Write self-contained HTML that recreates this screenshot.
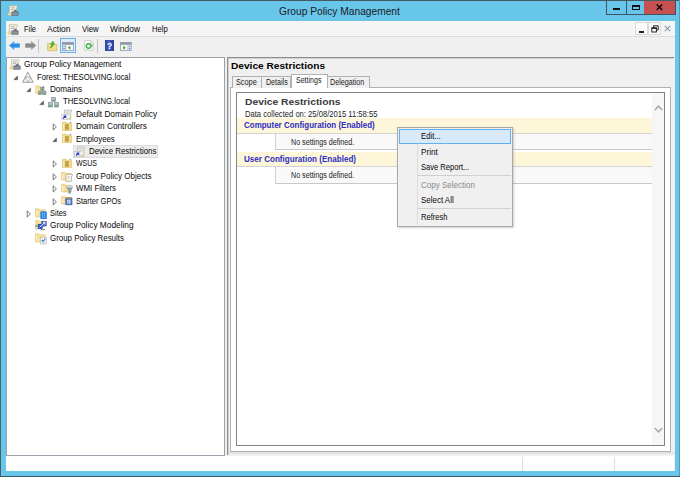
<!DOCTYPE html>
<html><head><meta charset="utf-8"><title>Group Policy Management</title>
<style>
html,body{margin:0;padding:0}
body{width:680px;height:477px;overflow:hidden;position:relative;background:#67c6ea;font-family:"Liberation Sans",sans-serif;font-size:9px;color:#000}
.abs{position:absolute;line-height:0}
div{box-sizing:border-box}
.t{position:absolute;white-space:nowrap;line-height:1;color:#080808;transform-origin:0 0}
.sel{position:absolute;background:#ececec;border:1px solid #dcdcdc}
.r{position:absolute;white-space:nowrap}
</style></head><body>
<!-- window frame -->
<div class="abs" style="left:0;top:0;width:680px;height:1px;background:#435a64"></div>
<div class="abs" style="left:0;top:0;width:1px;height:477px;background:#46606c"></div>
<div class="abs" style="left:679px;top:0;width:1px;height:477px;background:#5a9ab5"></div>
<div class="abs" style="left:0;top:476px;width:680px;height:1px;background:#3f5964"></div>
<!-- title -->
<div class="t" style="left:279.3px;top:5.89px;font-size:11.0px;transform:scaleX(0.928);color:#1a1a1a">Group Policy Management</div>
<div class="abs" style="left:6.5px;top:4px"><svg width="13" height="13" viewBox="0 0 13 13"><path d="M2.3 1.7 H9.7 Q10.7 1.7 10.4 2.7 L9.5 4 V9.2 H2.3 Z" fill="#f8f2de" stroke="#b4ab92" stroke-width="0.6"/><path d="M3.8 3.8h4.2M3.8 5.6h3.2" stroke="#9aa2b4" stroke-width="0.8"/><rect x="0.6" y="9" width="4.6" height="2.2" rx="1" fill="#f0dc9c" stroke="#d8c078" stroke-width="0.4"/><path d="M6.1 7.9 L8.3 5.2 L10.5 7.9 Z" fill="#5c646e"/><path d="M7.7 7.6 L8.3 6.6 L8.9 7.6Z" fill="#e8e0b8"/><rect x="4.8" y="7.9" width="6.4" height="3.5" fill="#74828f" stroke="#5a6672" stroke-width="0.5"/><path d="M5.6 9.1h4.8M5.6 10.3h4.8" stroke="#aab4be" stroke-width="0.5"/></svg></div>
<!-- caption buttons -->
<div class="abs" style="left:606px;top:1px;width:70px;height:14px;border:1px solid #3d5560;border-top:none;background:#67c6ea"></div>
<div class="abs" style="left:626px;top:1px;width:1px;height:14px;background:#3d5560"></div>
<div class="abs" style="left:644px;top:1px;width:31px;height:13px;background:#c75050"></div>
<div class="abs" style="left:613px;top:8.4px;width:7px;height:2px;background:#111"></div>
<div class="abs" style="left:631.5px;top:4.5px;width:8px;height:5.6px;border:1px solid #111;border-top-width:2px"></div>
<div class="abs" style="left:656px;top:4.3px"><svg width="7" height="6.4" viewBox="0 0 7 6.4"><path d="M0.8 0.4 L6.2 6 M6.2 0.4 L0.8 6" stroke="#111" stroke-width="1.5"/></svg></div>
<!-- client -->
<div class="abs" style="left:6px;top:21px;width:669px;height:450px;background:#f0f0f0"></div>
<!-- menubar -->
<div class="abs" style="left:6px;top:21px;width:669px;height:15px;background:#f5f5f5"></div>
<div class="abs" style="left:6px;top:36px;width:669px;height:1px;background:#dcdcdc"></div>
<div class="abs" style="left:7px;top:22.8px"><svg width="13" height="13" viewBox="0 0 13 13"><path d="M2.3 1.7 H9.7 Q10.7 1.7 10.4 2.7 L9.5 4 V9.2 H2.3 Z" fill="#f8f2de" stroke="#b4ab92" stroke-width="0.6"/><path d="M3.8 3.8h4.2M3.8 5.6h3.2" stroke="#9aa2b4" stroke-width="0.8"/><rect x="0.6" y="9" width="4.6" height="2.2" rx="1" fill="#f0dc9c" stroke="#d8c078" stroke-width="0.4"/><path d="M6.1 7.9 L8.3 5.2 L10.5 7.9 Z" fill="#5c646e"/><path d="M7.7 7.6 L8.3 6.6 L8.9 7.6Z" fill="#e8e0b8"/><rect x="4.8" y="7.9" width="6.4" height="3.5" fill="#74828f" stroke="#5a6672" stroke-width="0.5"/><path d="M5.6 9.1h4.8M5.6 10.3h4.8" stroke="#aab4be" stroke-width="0.5"/></svg></div>
<div class="t" style="left:23.8px;top:24.88px;font-size:9.0px;transform:scaleX(0.820)">File</div>
<div class="t" style="left:47.0px;top:24.88px;font-size:9.0px;transform:scaleX(0.939)">Action</div>
<div class="t" style="left:82.0px;top:24.88px;font-size:9.0px;transform:scaleX(0.863)">View</div>
<div class="t" style="left:110.0px;top:24.88px;font-size:9.0px;transform:scaleX(0.937)">Window</div>
<div class="t" style="left:151.8px;top:24.88px;font-size:9.0px;transform:scaleX(0.848)">Help</div>
<!-- mdi buttons -->
<div class="abs" style="left:635px;top:22px;width:13px;height:13px;background:#fbfbfb;border:1px solid #d8d8d8"></div>
<div class="abs" style="left:648px;top:22px;width:13px;height:13px;background:#fbfbfb;border:1px solid #d8d8d8"></div>
<div class="abs" style="left:639px;top:31px;width:5px;height:2px;background:#222"></div>
<div class="abs" style="left:651px;top:25px"><svg width="8" height="8" viewBox="0 0 8 8"><path d="M2.5 2.5 V0.8 H7.2 V5 H5.5" fill="none" stroke="#222" stroke-width="1"/><rect x="0.8" y="2.8" width="4.6" height="4.2" fill="#fbfbfb" stroke="#222" stroke-width="1"/><path d="M0.8 3.2h4.6" stroke="#222" stroke-width="1.4"/></svg></div>
<div class="abs" style="left:664px;top:25px"><svg width="7" height="7" viewBox="0 0 7 7"><path d="M0.8 0.8 L6.2 6.2 M6.2 0.8 L0.8 6.2" stroke="#8a9bb0" stroke-width="1.2"/></svg></div>
<!-- toolbar -->
<div class="abs" style="left:9px;top:41px"><svg width="11" height="9" viewBox="0 0 11 9"><defs><linearGradient id="gb" x1="0" y1="0" x2="0" y2="1"><stop offset="0" stop-color="#6ab8f4"/><stop offset="0.5" stop-color="#2288e6"/><stop offset="1" stop-color="#58aaf0"/></linearGradient></defs><path d="M0.3 4.5 L5 0.4 V2.6 H10.7 V6.4 H5 V8.6 Z" fill="url(#gb)" stroke="#4aa0ee" stroke-width="0.5"/></svg></div>
<div class="abs" style="left:24.8px;top:41px"><svg width="11.4" height="9" viewBox="0 0 11.4 9"><defs><linearGradient id="gg" x1="0" y1="0" x2="0" y2="1"><stop offset="0" stop-color="#b0b0b0"/><stop offset="0.5" stop-color="#858585"/><stop offset="1" stop-color="#a8a8a8"/></linearGradient></defs><path d="M11.1 4.5 L6.4 0.4 V2.6 H0.4 V6.4 H6.4 V8.6 Z" fill="url(#gg)" stroke="#909090" stroke-width="0.5"/></svg></div>
<div class="abs" style="left:38px;top:39px;width:1px;height:14px;background:#c4c4c4"></div>
<div class="abs" style="left:46.5px;top:39.5px"><svg width="11" height="12" viewBox="0 0 11 12"><path d="M0.6 3.6 h3.2 l0.8 0.9 h5.2 v6.3 h-9.2z" fill="#f2dc8e" stroke="#d4b55a" stroke-width="0.7"/><path d="M2.6 7.8 C3.6 7.2 4.6 6.4 4.8 4.2 L3.4 4.2 L6 1 L7.6 4.2 L6.4 4.2 C6.2 6.6 4.8 7.8 2.6 7.8Z" fill="#4cb83c" stroke="#2f9828" stroke-width="0.4"/></svg></div>
<div class="abs" style="left:60px;top:38px;width:16px;height:15px;background:#dcecfb;border:1px solid #62b2ee"></div>
<div class="abs" style="left:62.3px;top:41.8px"><svg width="12" height="9" viewBox="0 0 12 9"><rect x="0.4" y="0.4" width="11.2" height="8.2" fill="#f6f8fa" stroke="#8e9aa6" stroke-width="0.8"/><rect x="0.4" y="0.4" width="11.2" height="2.4" fill="#8e98a4"/><path d="M3.6 2.8v5.8" stroke="#8e9aa6" stroke-width="0.7"/><path d="M8.4 3.8 L5.8 5.8 L8.4 7.8z" fill="#36a836"/><rect x="1.4" y="3.8" width="1.2" height="1.4" fill="#4a80d8"/><rect x="1.4" y="6" width="1.2" height="1.4" fill="#4a80d8"/></svg></div>
<div class="abs" style="left:84.3px;top:40.2px"><svg width="9.6" height="10.6" viewBox="0 0 9.6 10.6"><path d="M0.4 0.4 H6.6 L9.2 3 V10.2 H0.4 Z" fill="#fbfbfb" stroke="#bcbcbc" stroke-width="0.7"/><path d="M6.6 0.4 V3 H9.2" fill="#e8e8e8" stroke="#bcbcbc" stroke-width="0.5"/><circle cx="4.6" cy="6" r="2.3" fill="none" stroke="#3eb03e" stroke-width="1.4"/><path d="M5.4 6.6 h3 v-2.6z" fill="#2f9a2f"/><path d="M6.2 6.2 l1.6 0" stroke="#fbfbfb" stroke-width="0.5"/></svg></div>
<div class="abs" style="left:97px;top:39px;width:1px;height:14px;background:#c4c4c4"></div>
<div class="abs" style="left:105px;top:40px"><svg width="9" height="11" viewBox="0 0 9 11"><defs><linearGradient id="gh" x1="0" y1="0" x2="1" y2="0"><stop offset="0" stop-color="#2a3c9c"/><stop offset="0.5" stop-color="#4a6cdc"/><stop offset="1" stop-color="#1c2c84"/></linearGradient></defs><rect x="0.3" y="0.3" width="8.4" height="10.4" fill="url(#gh)" stroke="#1c2a78" stroke-width="0.6"/><text x="4.5" y="8.8" font-family="Liberation Sans, sans-serif" font-size="9" font-weight="bold" fill="#fff" text-anchor="middle">?</text></svg></div>
<div class="abs" style="left:120px;top:42px"><svg width="11.6" height="9" viewBox="0 0 11.6 9"><rect x="0.4" y="0.4" width="10.8" height="8.2" fill="#f6f8fa" stroke="#8e9aa6" stroke-width="0.8"/><rect x="0.4" y="0.4" width="10.8" height="2.4" fill="#8e98a4"/><path d="M8 2.8v5.8" stroke="#8e9aa6" stroke-width="0.7"/><path d="M3.2 3.8 L5.8 5.8 L3.2 7.8z" fill="#36a836"/><rect x="9" y="3.8" width="1.2" height="1.4" fill="#4a80d8"/><rect x="9" y="6" width="1.2" height="1.4" fill="#4a80d8"/></svg></div>
<!-- left pane -->
<div class="abs" style="left:6px;top:57px;width:219px;height:399px;background:#fff;border:1px solid #9aa0aa"></div>
<div class="abs" style="left:8.5px;top:57.9px"><svg width="13" height="13" viewBox="0 0 13 13"><path d="M2.3 1.7 H9.7 Q10.7 1.7 10.4 2.7 L9.5 4 V9.2 H2.3 Z" fill="#f8f2de" stroke="#b4ab92" stroke-width="0.6"/><path d="M3.8 3.8h4.2M3.8 5.6h3.2" stroke="#9aa2b4" stroke-width="0.8"/><rect x="0.6" y="9" width="4.6" height="2.2" rx="1" fill="#f0dc9c" stroke="#d8c078" stroke-width="0.4"/><path d="M6.1 7.9 L8.3 5.2 L10.5 7.9 Z" fill="#5c646e"/><path d="M7.7 7.6 L8.3 6.6 L8.9 7.6Z" fill="#e8e0b8"/><rect x="4.8" y="7.9" width="6.4" height="3.5" fill="#74828f" stroke="#5a6672" stroke-width="0.5"/><path d="M5.6 9.1h4.8M5.6 10.3h4.8" stroke="#aab4be" stroke-width="0.5"/></svg></div>
<div class="t" style="left:23.6px;top:60.28px;font-size:9px;transform:scaleX(0.914)">Group Policy Management</div>
<div class="abs" style="left:12.5px;top:74.8px"><svg width="6" height="6" viewBox="0 0 6 6"><path d="M4.6 0.8 V4.8 H0.6 Z" fill="#595959" stroke="#4a4a4a" stroke-width="0.3"/></svg></div>
<div class="abs" style="left:21.5px;top:70.3px"><svg width="13" height="13" viewBox="0 0 13 13"><g transform="translate(-0.2,0.5)"><path d="M6 1.6 L11.4 11.8 H0.8 Z" fill="#f2f2f2" stroke="#8a8a8a" stroke-width="0.8"/><path d="M3.4 6.8 H8.8 L6.1 11.8 Z" fill="#fff" stroke="#9a9a9a" stroke-width="0.7"/></g></svg></div>
<div class="t" style="left:36.6px;top:72.68px;font-size:9px;transform:scaleX(0.859)">Forest: THESOLVING.local</div>
<div class="abs" style="left:25.5px;top:87.2px"><svg width="6" height="6" viewBox="0 0 6 6"><path d="M4.6 0.8 V4.8 H0.6 Z" fill="#595959" stroke="#4a4a4a" stroke-width="0.3"/></svg></div>
<div class="abs" style="left:34.5px;top:82.7px"><svg width="13" height="13" viewBox="0 0 13 13"><path d="M0.7 2.9 h3.2 l0.9 1 h4.5 v6.4 h-8.6z" fill="#f5e09a" stroke="#dcc070" stroke-width="0.6"/><path d="M1.9 4.5 v4.8" stroke="#fbf0c4" stroke-width="1.2"/><rect x="5.6" y="4.4" width="3.2" height="3" fill="#98a6b0" stroke="#72808a" stroke-width="0.4"/><rect x="3.2" y="8" width="3.4" height="3.6" fill="#98a6b0" stroke="#72808a" stroke-width="0.4"/><rect x="7.4" y="8" width="3.6" height="3.6" fill="#98a6b0" stroke="#72808a" stroke-width="0.4"/><rect x="3.8" y="10.4" width="2" height="1" fill="#44b034"/><rect x="8.2" y="10.4" width="2" height="1" fill="#44b034"/><rect x="6.4" y="6.2" width="1.6" height="0.9" fill="#44b034"/><circle cx="8.2" cy="4" r="0.8" fill="#3a7ee0"/></svg></div>
<div class="t" style="left:49.6px;top:85.08px;font-size:9px;transform:scaleX(0.901)">Domains</div>
<div class="abs" style="left:38.5px;top:99.6px"><svg width="6" height="6" viewBox="0 0 6 6"><path d="M4.6 0.8 V4.8 H0.6 Z" fill="#595959" stroke="#4a4a4a" stroke-width="0.3"/></svg></div>
<div class="abs" style="left:47.5px;top:95.1px"><svg width="13" height="13" viewBox="0 0 13 13"><g transform="translate(-0.7,0)"><rect x="4.2" y="2.3" width="4.2" height="4" fill="#a2aeb8" stroke="#74828c" stroke-width="0.5"/><rect x="1" y="7.4" width="4.4" height="4.6" fill="#a2aeb8" stroke="#74828c" stroke-width="0.5"/><rect x="7" y="7.4" width="4.4" height="4.6" fill="#a2aeb8" stroke="#74828c" stroke-width="0.5"/><path d="M4.8 3.6h3M1.6 8.8h3.2M7.6 8.8h3.2" stroke="#dfe5ea" stroke-width="0.6"/><rect x="1.8" y="10.6" width="2.6" height="1.1" fill="#40b030"/><rect x="7.8" y="10.6" width="2.6" height="1.1" fill="#40b030"/><rect x="5.2" y="5" width="2.2" height="0.9" fill="#40b030"/></g></svg></div>
<div class="t" style="left:62.6px;top:97.48px;font-size:9px;transform:scaleX(0.855)">THESOLVING.local</div>
<div class="abs" style="left:60.5px;top:107.5px"><svg width="13" height="13" viewBox="0 0 13 13"><g transform="translate(0,-0.5)"><path d="M3.4 2.6 H10.2 Q11.2 2.6 10.8 3.6 L9.8 4.8 V11.6 H3.4 Z" fill="#f0efe8" stroke="#a4a29a" stroke-width="0.6"/><path d="M4.8 4.6h3.6M4.8 6.4h3.6" stroke="#b0b4c0" stroke-width="0.7"/><path d="M8.6 10.2 q1.6 0.4 1.4 1.6 h-3" fill="#ecdca4" stroke="#c8b884" stroke-width="0.4"/><rect x="0.8" y="7.2" width="4.8" height="4.8" fill="#fbfbfb" stroke="#a8a8a8" stroke-width="0.5"/><path d="M2 11 L4.2 8.8 M4.4 10.4 V8.6 H2.6" stroke="#2030c8" stroke-width="1.1" fill="none"/></g></svg></div>
<div class="t" style="left:75.6px;top:109.88px;font-size:9px;transform:scaleX(0.915)">Default Domain Policy</div>
<div class="abs" style="left:52px;top:123.1px"><svg width="6" height="8" viewBox="0 0 6 8"><path d="M1.2 0.8 L4.4 3.9 L1.2 7 Z" fill="#fff" stroke="#5a5a5a" stroke-width="0.8"/></svg></div>
<div class="abs" style="left:60.5px;top:119.9px"><svg width="13" height="13" viewBox="0 0 13 13"><path d="M1.5 2.2 h3.4 l0.9 1 h4.8 v7.2 h-9.1z" fill="#f3dc8c" stroke="#d8b95c" stroke-width="0.6"/><path d="M2.6 4 v5.4" stroke="#faedb8" stroke-width="1.2"/><rect x="4.6" y="4.6" width="3" height="1.8" fill="#c4a248" stroke="#98782c" stroke-width="0.4"/><rect x="4.6" y="7.4" width="3" height="1.8" fill="#c4a248" stroke="#98782c" stroke-width="0.4"/><path d="M6.1 6.6v0.8" stroke="#98782c" stroke-width="0.6"/><circle cx="9.4" cy="2.4" r="0.7" fill="#5a9ae8"/></svg></div>
<div class="t" style="left:75.6px;top:122.28px;font-size:9px;transform:scaleX(0.922)">Domain Controllers</div>
<div class="abs" style="left:51.5px;top:136.8px"><svg width="6" height="6" viewBox="0 0 6 6"><path d="M4.6 0.8 V4.8 H0.6 Z" fill="#595959" stroke="#4a4a4a" stroke-width="0.3"/></svg></div>
<div class="abs" style="left:60.5px;top:132.3px"><svg width="13" height="13" viewBox="0 0 13 13"><path d="M1.5 2.2 h3.4 l0.9 1 h4.8 v7.2 h-9.1z" fill="#f3dc8c" stroke="#d8b95c" stroke-width="0.6"/><path d="M2.6 4 v5.4" stroke="#faedb8" stroke-width="1.2"/><rect x="4.6" y="4.6" width="3" height="1.8" fill="#c4a248" stroke="#98782c" stroke-width="0.4"/><rect x="4.6" y="7.4" width="3" height="1.8" fill="#c4a248" stroke="#98782c" stroke-width="0.4"/><path d="M6.1 6.6v0.8" stroke="#98782c" stroke-width="0.6"/><circle cx="9.4" cy="2.4" r="0.7" fill="#5a9ae8"/></svg></div>
<div class="t" style="left:75.6px;top:134.68px;font-size:9px;transform:scaleX(0.871)">Employees</div>
<div class="sel" style="left:72.5px;top:144.8px;width:85px;height:13px"></div>
<div class="abs" style="left:73.5px;top:144.7px"><svg width="13" height="13" viewBox="0 0 13 13"><g transform="translate(0,-0.5)"><path d="M3.4 2.6 H10.2 Q11.2 2.6 10.8 3.6 L9.8 4.8 V11.6 H3.4 Z" fill="#f0efe8" stroke="#a4a29a" stroke-width="0.6"/><path d="M4.8 4.6h3.6M4.8 6.4h3.6" stroke="#b0b4c0" stroke-width="0.7"/><path d="M8.6 10.2 q1.6 0.4 1.4 1.6 h-3" fill="#ecdca4" stroke="#c8b884" stroke-width="0.4"/><rect x="0.8" y="7.2" width="4.8" height="4.8" fill="#fbfbfb" stroke="#a8a8a8" stroke-width="0.5"/><path d="M2 11 L4.2 8.8 M4.4 10.4 V8.6 H2.6" stroke="#2030c8" stroke-width="1.1" fill="none"/></g></svg></div>
<div class="t" style="left:88.6px;top:147.08px;font-size:9px;transform:scaleX(0.875)">Device Restrictions</div>
<div class="abs" style="left:52px;top:160.3px"><svg width="6" height="8" viewBox="0 0 6 8"><path d="M1.2 0.8 L4.4 3.9 L1.2 7 Z" fill="#fff" stroke="#5a5a5a" stroke-width="0.8"/></svg></div>
<div class="abs" style="left:60.5px;top:157.1px"><svg width="13" height="13" viewBox="0 0 13 13"><path d="M1.5 2.2 h3.4 l0.9 1 h4.8 v7.2 h-9.1z" fill="#f3dc8c" stroke="#d8b95c" stroke-width="0.6"/><path d="M2.6 4 v5.4" stroke="#faedb8" stroke-width="1.2"/><rect x="4.6" y="4.6" width="3" height="1.8" fill="#c4a248" stroke="#98782c" stroke-width="0.4"/><rect x="4.6" y="7.4" width="3" height="1.8" fill="#c4a248" stroke="#98782c" stroke-width="0.4"/><path d="M6.1 6.6v0.8" stroke="#98782c" stroke-width="0.6"/><circle cx="9.4" cy="2.4" r="0.7" fill="#5a9ae8"/></svg></div>
<div class="t" style="left:75.6px;top:159.48px;font-size:9px;transform:scaleX(0.778)">WSUS</div>
<div class="abs" style="left:52px;top:172.7px"><svg width="6" height="8" viewBox="0 0 6 8"><path d="M1.2 0.8 L4.4 3.9 L1.2 7 Z" fill="#fff" stroke="#5a5a5a" stroke-width="0.8"/></svg></div>
<div class="abs" style="left:60.5px;top:169.5px"><svg width="13" height="13" viewBox="0 0 13 13"><path d="M0.6 2.3 h3.2 l0.9 1 h5.7 v6.6 h-9.8z" fill="#f5e09a" stroke="#dcc070" stroke-width="0.6"/><path d="M1.7999999999999998 3.9 v5.0" stroke="#fbf0c4" stroke-width="1.2"/><path d="M5 4.4 H10.8 Q11.8 4.4 11.4 5.4 L10.6 6.2 V11.4 H5 Z" fill="#f8f8f6" stroke="#9a9a9a" stroke-width="0.6"/><path d="M6.2 6.6h3M6.2 8.2h3" stroke="#b8b8c4" stroke-width="0.6"/><path d="M4.6 10.4 h3 v1.2 h-3z" fill="#ecdca4" stroke="#c0b080" stroke-width="0.3"/></svg></div>
<div class="t" style="left:75.6px;top:171.88px;font-size:9px;transform:scaleX(0.894)">Group Policy Objects</div>
<div class="abs" style="left:52px;top:185.1px"><svg width="6" height="8" viewBox="0 0 6 8"><path d="M1.2 0.8 L4.4 3.9 L1.2 7 Z" fill="#fff" stroke="#5a5a5a" stroke-width="0.8"/></svg></div>
<div class="abs" style="left:60.5px;top:181.9px"><svg width="13" height="13" viewBox="0 0 13 13"><path d="M0.6 2.3 h3.2 l0.9 1 h5.7 v6.6 h-9.8z" fill="#f5e09a" stroke="#dcc070" stroke-width="0.6"/><path d="M1.7999999999999998 3.9 v5.0" stroke="#fbf0c4" stroke-width="1.2"/><path d="M5.6 5.4 H11.6 L9.4 8.2 V11.2 H7.8 V8.2 Z" fill="#8aa2ba" stroke="#5c7690" stroke-width="0.5"/><rect x="5.8" y="4" width="5.6" height="1.6" fill="#eef2f6" stroke="#8a9aac" stroke-width="0.4"/></svg></div>
<div class="t" style="left:75.6px;top:184.28px;font-size:9px;transform:scaleX(0.879)">WMI Filters</div>
<div class="abs" style="left:52px;top:197.5px"><svg width="6" height="8" viewBox="0 0 6 8"><path d="M1.2 0.8 L4.4 3.9 L1.2 7 Z" fill="#fff" stroke="#5a5a5a" stroke-width="0.8"/></svg></div>
<div class="abs" style="left:60.5px;top:194.3px"><svg width="13" height="13" viewBox="0 0 13 13"><path d="M0.6 2.6 h3.2 l0.9 1 h5.7 v6.4 h-9.8z" fill="#f5e09a" stroke="#dcc070" stroke-width="0.6"/><path d="M1.7999999999999998 4.2 v4.8" stroke="#fbf0c4" stroke-width="1.2"/><rect x="4.8" y="4" width="6.2" height="6.8" fill="#5478cc" stroke="#2e4ea4" stroke-width="0.6"/><rect x="4.8" y="3.6" width="6.2" height="1.2" fill="#b08858"/><rect x="6.2" y="5.8" width="3.4" height="3.8" fill="#dce8fa"/><path d="M7.9 6.4v2.6" stroke="#5478cc" stroke-width="0.8"/></svg></div>
<div class="t" style="left:75.6px;top:196.68px;font-size:9px;transform:scaleX(0.833)">Starter GPOs</div>
<div class="abs" style="left:26px;top:209.9px"><svg width="6" height="8" viewBox="0 0 6 8"><path d="M1.2 0.8 L4.4 3.9 L1.2 7 Z" fill="#fff" stroke="#5a5a5a" stroke-width="0.8"/></svg></div>
<div class="abs" style="left:34.5px;top:206.7px"><svg width="13" height="13" viewBox="0 0 13 13"><path d="M0.5 1.8 h3.2 l0.9 1 h5.5 v7.2 h-9.6z" fill="#f5e09a" stroke="#dcc070" stroke-width="0.6"/><path d="M1.7 3.4000000000000004 v5.6" stroke="#fbf0c4" stroke-width="1.2"/><rect x="5.8" y="4.8" width="5.6" height="7" fill="#1e88f0" stroke="#1668c8" stroke-width="0.5"/><path d="M7 6.4h3.2M7 8.2h3.2M7 10h3.2" stroke="#a8d4ff" stroke-width="0.8"/><path d="M8.6 5v6.6" stroke="#1e88f0" stroke-width="0.7"/></svg></div>
<div class="t" style="left:49.6px;top:209.08px;font-size:9px;transform:scaleX(0.829)">Sites</div>
<div class="abs" style="left:34.5px;top:219.1px"><svg width="13" height="13" viewBox="0 0 13 13"><path d="M0.8 1.4 h3.2 l0.9 1 h3.6 v5.6 h-7.7z" fill="#f5e09a" stroke="#dcc070" stroke-width="0.6"/><rect x="0.8" y="6" width="1.6" height="4.6" fill="#e8e8e8" stroke="#8a8a8a" stroke-width="0.4"/><rect x="1" y="6.2" width="1.2" height="1.6" fill="#48b838"/><rect x="3.2" y="5.2" width="4" height="4.6" fill="#3050d0" stroke="#1c34a0" stroke-width="0.5"/><rect x="6.8" y="2.4" width="4.4" height="4.6" fill="#4464dc" stroke="#1c34a0" stroke-width="0.5"/><path d="M4.4 8.4 L9.8 3.6 M9.9 5.4 V3.5 H8" stroke="#fff" stroke-width="0.9" fill="none"/><path d="M5.6 10 h4.4 v1.2 h-4.4z" fill="#8a929a"/></svg></div>
<div class="t" style="left:49.6px;top:221.48px;font-size:9px;transform:scaleX(0.923)">Group Policy Modeling</div>
<div class="abs" style="left:34.5px;top:231.5px"><svg width="13" height="13" viewBox="0 0 13 13"><path d="M0.5 1.7 h3.2 l0.9 1 h5.5 v7.2 h-9.6z" fill="#f5e09a" stroke="#dcc070" stroke-width="0.6"/><path d="M1.7 3.3 v5.6" stroke="#fbf0c4" stroke-width="1.2"/><rect x="5.6" y="5.4" width="5.8" height="6.6" fill="#f6f6f6" stroke="#a8a8a8" stroke-width="0.5"/><path d="M6.8 8 l1.4 1.5 l2.2-2.8" stroke="#2e7ae0" stroke-width="1.1" fill="none"/><path d="M6.6 10.8h3.8" stroke="#b0b0b0" stroke-width="0.5"/></svg></div>
<div class="t" style="left:49.6px;top:233.88px;font-size:9px;transform:scaleX(0.880)">Group Policy Results</div>

<!-- right pane -->
<div class="abs" style="left:227px;top:57px;width:447px;height:398px;background:#f0f0f0;border-left:1px solid #8c8c8c;border-top:1px solid #8c8c8c;box-shadow:inset 1px 1px 0 #d2d2d2"></div>
<div class="t" style="left:230.7px;top:60.92px;font-size:9.9px;transform:scaleX(1.026);font-weight:bold;color:#000">Device Restrictions</div>
<!-- tab page -->
<div class="abs" style="left:230px;top:87.4px;width:441px;height:364.6px;background:#fff;border:1px solid #b0b0b8"></div>
<!-- tabs -->
<div class="abs" style="left:232px;top:75.5px;width:30px;height:12.5px;background:#f0f0f0;border:1px solid #b0b0b0;border-bottom:none"></div>
<div class="abs" style="left:261px;top:75.5px;width:30px;height:12.5px;background:#f0f0f0;border:1px solid #b0b0b0;border-bottom:none"></div>
<div class="abs" style="left:326px;top:75.5px;width:43.5px;height:12.5px;background:#f0f0f0;border:1px solid #b0b0b0;border-bottom:none"></div>
<div class="abs" style="left:290.5px;top:73.6px;width:37px;height:14.6px;background:#fff;border:1px solid #b0b0b0;border-bottom:none"></div>
<div class="t" style="left:235.9px;top:77.77px;font-size:8.3px;transform:scaleX(0.880);color:#222">Scope</div>
<div class="t" style="left:265.5px;top:77.77px;font-size:8.3px;transform:scaleX(0.855);color:#222">Details</div>
<div class="t" style="left:295.9px;top:75.97px;font-size:8.3px;transform:scaleX(0.847);color:#222">Settings</div>
<div class="t" style="left:330.2px;top:77.77px;font-size:8.3px;transform:scaleX(0.862);color:#222">Delegation</div>
<!-- report box -->
<div class="abs" style="left:236px;top:92px;width:429px;height:354px;background:#fff;border:1px solid #828282"></div>
<div class="abs" style="left:652px;top:93px;width:12px;height:352px;background:#f6f6f6"></div>
<div class="abs" style="left:654px;top:105px"><svg width="9" height="6" viewBox="0 0 9 6"><path d="M0.8 5 L4.5 1.2 L8.2 5" fill="none" stroke="#aaaaaa" stroke-width="1.6"/></svg></div>
<div class="abs" style="left:654px;top:427px"><svg width="9" height="6" viewBox="0 0 9 6"><path d="M0.8 1 L4.5 4.8 L8.2 1" fill="none" stroke="#aaaaaa" stroke-width="1.6"/></svg></div>
<div class="t" style="left:245.3px;top:96.52px;font-size:9.9px;transform:scaleX(1.042);font-weight:bold;color:#3a3a3a">Device Restrictions</div>
<div class="t" style="left:244.8px;top:109.80px;font-size:8.5px;transform:scaleX(0.896);color:#222">Data collected on: 25/08/2015 11:58:55</div>
<div class="abs" style="left:237px;top:118px;width:415px;height:15.5px;background:#fdf6d8;border-bottom:1px solid #d4d4d4"></div>
<div class="t" style="left:243.7px;top:121.45px;font-size:8.8px;transform:scaleX(0.907);font-weight:bold;color:#2c2cc4">Computer Configuration (Enabled)</div>
<div class="abs" style="left:275px;top:133.5px;width:377px;height:16px;background:#f9f9f9;border-left:1px solid #d0d0d0;border-bottom:1px solid #c8c8c8"></div>
<div class="t" style="left:290.5px;top:138.10px;font-size:8.5px;transform:scaleX(0.840);color:#222">No settings defined.</div>
<div class="abs" style="left:237px;top:151.6px;width:415px;height:15.6px;background:#fdf6d8;border-bottom:1px solid #d4d4d4"></div>
<div class="t" style="left:243.7px;top:154.75px;font-size:8.8px;transform:scaleX(0.917);font-weight:bold;color:#2c2cc4">User Configuration (Enabled)</div>
<div class="abs" style="left:275px;top:167.2px;width:377px;height:16.6px;background:#f9f9f9;border-left:1px solid #d0d0d0;border-bottom:1px solid #c8c8c8"></div>
<div class="t" style="left:290.5px;top:171.30px;font-size:8.5px;transform:scaleX(0.840);color:#222">No settings defined.</div>
<!-- context menu -->
<div class="abs" style="left:397px;top:126.8px;width:116px;height:100.6px;background:#f0f0f0;border:1px solid #a8a8a8;box-shadow:1px 1px 2px rgba(0,0,0,0.18)"></div>
<div class="abs" style="left:416.7px;top:129px;width:1px;height:96px;background:#dcdcdc"></div>
<div class="abs" style="left:399px;top:129px;width:112px;height:15.4px;background:#d8e9fa;border:1px solid #62b0ee"></div>
<div class="t" style="left:421.0px;top:132.48px;font-size:9.0px;transform:scaleX(0.856)">Edit...</div>
<div class="t" style="left:421.0px;top:147.58px;font-size:9.0px;transform:scaleX(0.907)">Print</div>
<div class="t" style="left:421.0px;top:162.78px;font-size:9.0px;transform:scaleX(0.840)">Save Report...</div>
<div class="abs" style="left:418px;top:175px;width:93px;height:1px;background:#d0d0d0"></div>
<div class="t" style="left:421.0px;top:180.78px;font-size:9.0px;transform:scaleX(0.892);color:#8a8a8a">Copy Selection</div>
<div class="t" style="left:421.0px;top:195.68px;font-size:9.0px;transform:scaleX(0.883)">Select All</div>
<div class="abs" style="left:418px;top:208px;width:93px;height:1px;background:#d0d0d0"></div>
<div class="t" style="left:421.0px;top:213.18px;font-size:9.0px;transform:scaleX(0.838)">Refresh</div>
<!-- status bar -->
<div class="abs" style="left:229px;top:452px;width:445px;height:2px;background:#e2e2e2"></div>
<div class="abs" style="left:673px;top:456px;width:1px;height:15px;background:#dcdcdc"></div>
<div class="abs" style="left:6px;top:456px;width:668px;height:15px;background:#fff"></div>
<div class="abs" style="left:522px;top:457px;width:1px;height:14px;background:#dcdcdc"></div>
<div class="abs" style="left:614px;top:457px;width:1px;height:14px;background:#dcdcdc"></div>
</body></html>
